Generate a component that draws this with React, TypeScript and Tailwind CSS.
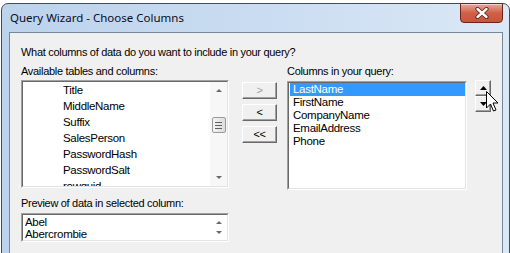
import React from "react";

const Btn = ({ children, disabled }: { children: React.ReactNode; disabled?: boolean }) => (
  <div
    className={
      "h-[17px] w-[35px] flex items-center justify-center border border-t-white border-l-white border-r-[#696969] border-b-[#696969] bg-[#f0f0f0] shadow-[inset_-1px_-1px_0_#a0a0a0] text-[11px] leading-none " +
      (disabled ? "text-[#a0a0a0]" : "text-black")
    }
  >
    {children}
  </div>
);

const Sunken = ({ className, children }: { className: string; children: React.ReactNode }) => (
  <div className={"border border-t-[#a0a0a0] border-l-[#a0a0a0] border-r-white border-b-white " + className}>
    <div className="w-full h-full border border-t-[#696969] border-l-[#696969] border-r-[#e3e3e3] border-b-[#e3e3e3] bg-white overflow-hidden relative">
      {children}
    </div>
  </div>
);

const SmallUp = () => (
  <svg width="6" height="3" viewBox="0 0 6 3">
    <path d="M0 3 L3 0 L6 3 Z" fill="#6a6a6a" />
  </svg>
);
const SmallDown = () => (
  <svg width="6" height="3" viewBox="0 0 6 3">
    <path d="M0 0 L3 3 L6 0 Z" fill="#6a6a6a" />
  </svg>
);

export default function App() {
  const left = ["Title", "MiddleName", "Suffix", "SalesPerson", "PasswordHash", "PasswordSalt", "rowguid"];
  const right = ["LastName", "FirstName", "CompanyName", "EmailAddress", "Phone"];
  return (
    <div
      className="relative w-[510px] h-[253px] overflow-hidden bg-white"
      style={{ fontFamily: '"Liberation Sans", Arial, sans-serif' }}
    >
      <div className="relative ml-[1px] mt-[3px] w-[509px] h-[270px] rounded-t-[7px] border border-[#3e4c5c] bg-gradient-to-r from-[#bcd3ec] via-[#c9dcf1] to-[#dbe8f6] flex flex-col">
        {/* title bar */}
        <div className="h-[28px] flex items-center pl-[8px]">
          <span
            className="text-[11.5px] text-[#0b0b24]"
            style={{ fontFamily: '"Noto Sans", "Open Sans", sans-serif' }}
          >
            Query Wizard - Choose Columns
          </span>
        </div>
        <div className="absolute top-[-1px] right-[6px] w-[43px] h-[20px] rounded-b-[4px] border border-[#6e2418] bg-gradient-to-b from-[#e9a797] via-[#cf6048] to-[#c8553b] flex items-center justify-center shadow-[inset_0_1px_0_rgba(255,255,255,0.5)]">
          <svg width="14" height="12" viewBox="0 0 14 12">
            <path d="M2.5 2 L11.5 10 M11.5 2 L2.5 10" stroke="#5a2418" strokeWidth="4.2" strokeLinecap="round" />
            <path d="M2.5 2 L11.5 10 M11.5 2 L2.5 10" stroke="#ffffff" strokeWidth="2.4" strokeLinecap="round" />
          </svg>
        </div>
        {/* client area */}
        <div className="flex-1 ml-[7px] mr-[6px] border border-[#76879a] bg-[#f0f0f0] pl-[11px] pt-[12px] text-[11px] tracking-[-0.3px] text-black">
          <div className="h-[14px] leading-[14px]">What columns of data do you want to include in your query?</div>
          <div className="flex mt-[5px]">
            {/* left column */}
            <div className="w-[208px] flex flex-col">
              <div className="h-[14px] leading-[14px] mb-[2px]">Available tables and columns:</div>
              <Sunken className="h-[108px]">
                <div className="pl-[40px]">
                  {left.map((t) => (
                    <div key={t} className="h-[16px] leading-[16px] text-[11.5px]">
                      {t}
                    </div>
                  ))}
                </div>
                <div className="absolute right-0 top-0 bottom-0 w-[17px] bg-[#f7f7f7] flex flex-col items-center">
                  <div className="h-[17px] flex items-center justify-center">
                    <SmallUp />
                  </div>
                  <div className="mt-[18px] w-[14px] h-[16px] rounded-[2px] border border-[#9a9a9a] bg-gradient-to-r from-[#f4f4f4] to-[#dcdcdc] flex flex-col items-center justify-center gap-[2px]">
                    <div className="w-[7px] h-[1px] bg-[#606060]" />
                    <div className="w-[7px] h-[1px] bg-[#606060]" />
                    <div className="w-[7px] h-[1px] bg-[#606060]" />
                  </div>
                  <div className="flex-1" />
                  <div className="h-[17px] flex items-center justify-center">
                    <SmallDown />
                  </div>
                </div>
              </Sunken>
              <div className="h-[14px] leading-[14px] mt-[8px] mb-[3px]">Preview of data in selected column:</div>
              <Sunken className="h-[29px]">
                <div className="pl-[2px] pt-[1px]">
                  <div className="h-[12px] leading-[12px] text-[11.5px]">Abel</div>
                  <div className="h-[12px] leading-[12px] text-[11.5px]">Abercrombie</div>
                </div>
                <div className="absolute right-0 top-0 bottom-0 w-[17px] flex flex-col items-center justify-between py-[6px]">
                  <SmallUp />
                  <SmallDown />
                </div>
              </Sunken>
            </div>
            {/* buttons */}
            <div className="ml-[13px] pt-[18px] flex flex-col gap-[5px]">
              <Btn disabled>&gt;</Btn>
              <Btn>&lt;</Btn>
              <Btn>&lt;&lt;</Btn>
            </div>
            {/* right column */}
            <div className="ml-[10px] w-[180px] flex flex-col">
              <div className="h-[14px] leading-[14px] mb-[3px]">Columns in your query:</div>
              <Sunken className="h-[109px]">
                <div className="pl-[1px] pr-[0px]">
                  {right.map((t, i) => (
                    <div
                      key={t}
                      className={
                        "h-[13px] leading-[13px] pl-[3px] text-[11.5px] " +
                        (i === 0 ? "bg-[#3399ff] text-white" : "")
                      }
                    >
                      {t}
                    </div>
                  ))}
                </div>
              </Sunken>
            </div>
            {/* spin */}
            <div className="ml-[8px] pt-[16px] flex flex-col">
              <div className="w-[16px] h-[16px] flex items-center justify-center border border-t-white border-l-white border-r-[#696969] border-b-[#696969] bg-[#f0f0f0] shadow-[inset_-1px_-1px_0_#a0a0a0]">
                <svg width="7" height="4" viewBox="0 0 7 4">
                  <path d="M0 4 L3.5 0 L7 4 Z" fill="#000" />
                </svg>
              </div>
              <div className="w-[16px] h-[16px] flex items-center justify-center border border-t-white border-l-white border-r-[#696969] border-b-[#696969] bg-[#f0f0f0] shadow-[inset_-1px_-1px_0_#a0a0a0]">
                <svg width="7" height="4" viewBox="0 0 7 4">
                  <path d="M0 0 L3.5 4 L7 0 Z" fill="#000" />
                </svg>
              </div>
            </div>
          </div>
        </div>
      </div>
      {/* mouse cursor */}
      <svg className="absolute left-[486px] top-[91px]" width="14" height="22" viewBox="0 0 14 22">
        <path d="M0.5 0.5 L0.5 17 L4.5 13 L7.5 20 L10 19 L7 12 L12 12 Z" fill="#fff" stroke="#000" strokeWidth="1" strokeLinejoin="round" />
      </svg>
    </div>
  );
}
